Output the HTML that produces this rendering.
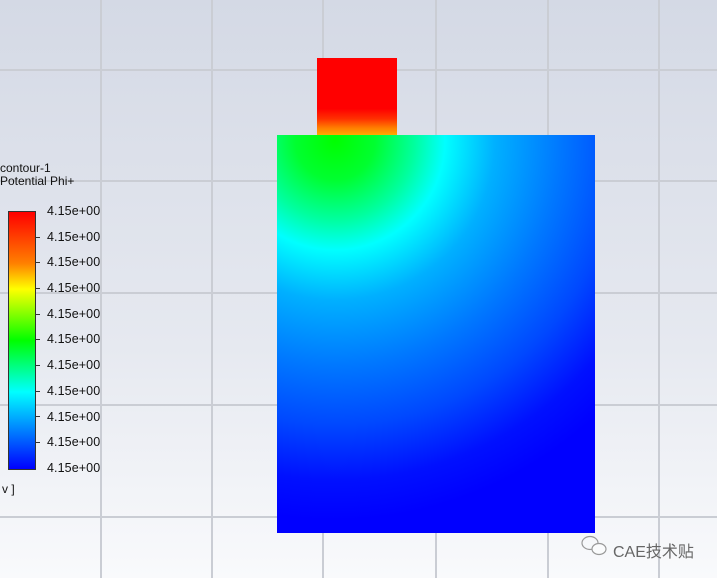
<!DOCTYPE html>
<html><head><style>
body{margin:0;width:717px;height:578px;overflow:hidden;position:relative;background:linear-gradient(#d4d9e5,#e6e9f0 60%,#f9fafc);font-family:"Liberation Sans","Noto Sans CJK SC",sans-serif}
.v{position:absolute;top:0;width:2px;height:578px;background:#cacdd4}
.h{position:absolute;left:0;height:2px;width:717px;background:#cacdd4}
.t{position:absolute;font-size:12.5px;letter-spacing:0.1px;color:#111;left:47px}
.k{position:absolute;left:35px;width:5px;height:1px;background:#333}
</style></head><body>
<div class="v" style="left:100px"></div><div class="v" style="left:211px"></div><div class="v" style="left:322px"></div><div class="v" style="left:435px"></div><div class="v" style="left:547px"></div><div class="v" style="left:658px"></div>
<div class="h" style="top:69px"></div><div class="h" style="top:180px"></div><div class="h" style="top:292px"></div><div class="h" style="top:404px"></div><div class="h" style="top:516px"></div>
<div style="position:absolute;left:317px;top:58px;width:80px;height:78px;background:linear-gradient(#ff0000 0,#ff0000 65%,#ff3000 78%,#ff8000 90%,#ffb000 100%)"></div>
<div style="position:absolute;left:277px;top:135px;width:318px;height:398px;background:radial-gradient(circle at 58px 5px,#00ff00 0,#00ff30 40px,#00ffa0 80px,#00ffff 110px,#00b0ff 160px,#0078ff 225px,#0048ff 285px,#0010ff 340px,#0000ff 380px)"></div>
<div style="position:absolute;left:0;top:162px;font-size:12px;line-height:13px;color:#111">contour-1<br>Potential Phi+</div>
<div style="position:absolute;left:8px;top:211px;width:26px;height:257px;border:1px solid #333;background:linear-gradient(#ff0000,#ff8000 20%,#ffff00 30%,#80ff00 40%,#00ff00 50%,#00ff80 60%,#00ffff 70%,#0080ff 85%,#0000ff)"></div>
<div class="t" style="top:204px">4.15e+00</div><div class="t" style="top:230px">4.15e+00</div><div class="t" style="top:255px">4.15e+00</div><div class="t" style="top:281px">4.15e+00</div><div class="t" style="top:307px">4.15e+00</div><div class="t" style="top:332px">4.15e+00</div><div class="t" style="top:358px">4.15e+00</div><div class="t" style="top:384px">4.15e+00</div><div class="t" style="top:410px">4.15e+00</div><div class="t" style="top:435px">4.15e+00</div><div class="t" style="top:461px">4.15e+00</div>
<div class="k" style="top:237px"></div><div class="k" style="top:262px"></div><div class="k" style="top:288px"></div><div class="k" style="top:314px"></div><div class="k" style="top:339px"></div><div class="k" style="top:365px"></div><div class="k" style="top:391px"></div><div class="k" style="top:416px"></div><div class="k" style="top:442px"></div>
<div style="position:absolute;left:2px;top:482px;font-size:12px;color:#111">v ]</div>
<svg style="position:absolute;left:580px;top:534px" width="30" height="24" viewBox="0 0 30 24"><ellipse cx="10" cy="9" rx="8" ry="6.5" fill="none" stroke="#999" stroke-width="1.2"/><ellipse cx="19" cy="15" rx="7" ry="5.5" fill="#fafbfc" stroke="#999" stroke-width="1.2"/></svg>
<div style="position:absolute;left:613px;top:538px;font-size:16px;color:#666">CAE技术贴</div>
</body></html>
